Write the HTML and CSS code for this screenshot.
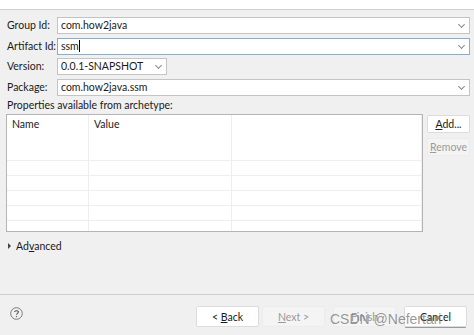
FILE: index.html
```html
<!DOCTYPE html>
<html lang="en">
<head>
  <meta charset="UTF-8">
  <meta name="viewport" content="width=device-width, initial-scale=1.0">
  <title>New Maven Project</title>
  <link rel="stylesheet" href="styles.css">
</head>
<body>
  <div class="topbar"></div>

  <div class="content">
    <div class="fields">
      <label>Group Id:</label>
      <div class="combo">com.how2java<span class="chev"></span></div>
      <label>Artifact Id:</label>
      <div class="combo focused">ssm<span class="caret"></span><span class="chev"></span></div>
      <label>Version:</label>
      <div class="combo short">0.0.1-SNAPSHOT<span class="chev"></span></div>
      <label>Package:</label>
      <div class="combo">com.how2java.ssm<span class="chev"></span></div>
    </div>

    <p class="caption">Properties available from archetype:</p>

    <div class="props">
      <div class="table">
        <div class="row head">
          <div class="cell c1">Name</div>
          <div class="cell c2">Value</div>
          <div class="cell c3"></div>
        </div>
        <div class="row"><div class="cell c1"></div><div class="cell c2"></div><div class="cell c3"></div></div>
        <div class="row"><div class="cell c1"></div><div class="cell c2"></div><div class="cell c3"></div></div>
        <div class="row"><div class="cell c1"></div><div class="cell c2"></div><div class="cell c3"></div></div>
        <div class="row"><div class="cell c1"></div><div class="cell c2"></div><div class="cell c3"></div></div>
        <div class="row"><div class="cell c1"></div><div class="cell c2"></div><div class="cell c3"></div></div>
        <div class="row last"><div class="cell c1"></div><div class="cell c2"></div><div class="cell c3"></div></div>
      </div>
      <div class="side">
        <button class="btn small"><u>A</u>dd...</button>
        <button class="btn small disabled"><u>R</u>emove</button>
      </div>
    </div>

    <div class="advanced"><span class="tri"></span>Ad<u>v</u>anced</div>
  </div>

  <div class="footer">
    <svg class="help" width="13" height="13" viewBox="0 0 13 13">
      <circle cx="6.5" cy="6.5" r="5.8" fill="none" stroke="#7a7a7a" stroke-width="1"/>
      <path d="M4.6 5.1 C4.6 3.2 8.4 3.2 8.4 5.1 C8.4 6.3 6.5 6.4 6.5 7.8" fill="none" stroke="#555" stroke-width="1.1"/>
      <circle cx="6.5" cy="9.6" r="0.7" fill="#555"/>
    </svg>
    <div class="buttons">
      <button class="btn">&lt; <u>B</u>ack</button>
      <button class="btn disabled"><u>N</u>ext &gt;</button>
      <button class="btn disabled finish"><u>F</u>inish</button>
      <button class="btn default">Cancel</button>
    </div>
    <div class="watermark">CSDN @Nefertari</div>
  </div>
</body>
</html>
```
FILE: styles.css
```css
body {
  margin: 0;
  width: 474px;
  height: 335px;
  background-color: #f0f0f0;
  font-family: 'Lato', sans-serif;
  font-size: 10.5px;
  color: #1a1a1a;
  overflow: hidden;
  position: relative;
}
.topbar {
  height: 9px;
  background-color: #ffffff;
  border-bottom: 1px solid #cfcfcf;
}
.content {
  padding: 7px 4px 0 7px;
}
.fields {
  display: grid;
  grid-template-columns: 50px 1fr;
  grid-auto-rows: 17px;
  row-gap: 3.5px;
  align-items: center;
}
.fields label {
  line-height: 17px;
  white-space: nowrap;
}
.combo {
  position: relative;
  height: 17px;
  box-sizing: border-box;
  background-color: #ffffff;
  border: 1px solid #c4c4c4;
  padding-left: 3px;
  line-height: 15px;
}
.combo.short {
  width: 110px;
}
.combo.focused {
  border-color: #86aece;
}
.chev {
  position: absolute;
  right: 5px;
  top: 4px;
  width: 4px;
  height: 4px;
  border-right: 1px solid #8a8a8a;
  border-bottom: 1px solid #8a8a8a;
  transform: rotate(45deg);
}
.caret {
  display: inline-block;
  width: 1px;
  height: 12px;
  background-color: #000;
  vertical-align: -2px;
}
.caption {
  margin: 2px 0 2px;
  line-height: 14px;
}
.props {
  display: flex;
  gap: 4px;
  margin-left: -1px;
}
.table {
  width: 417px;
  height: 118px;
  box-sizing: border-box;
  background-color: #ffffff;
  border: 1px solid #b4b4b4;
  overflow: hidden;
}
.row {
  display: flex;
  height: 15px;
  border-bottom: 1px solid #eeeeee;
  box-sizing: border-box;
}
.row.head {
  height: 31px;
  border-bottom: none;
}
.cell {
  border-right: 1px solid #eeeeee;
  padding: 1px 0 0 5px;
  line-height: 16px;
  box-sizing: border-box;
}
.c1 { width: 82px; }
.c2 { width: 143px; }
.c3 { flex: 1; }
.side {
  display: flex;
  flex-direction: column;
  gap: 5px;
  padding-top: 1px;
}
.btn {
  font-family: inherit;
  font-size: 10.5px;
  color: #1a1a1a;
  background-color: #ffffff;
  border: 1px solid #dcdcdc;
  border-radius: 2px;
  height: 21px;
  width: 63px;
  padding: 0;
}
.btn.small {
  width: 43px;
  height: 18px;
}
.btn.disabled {
  background-color: #f4f4f4;
  border-color: #ececec;
  color: #9a9a9a;
}
.advanced {
  margin-top: 7px;
  padding-left: 1px;
  line-height: 14px;
  display: flex;
  align-items: center;
}
.tri {
  width: 0;
  height: 0;
  border-top: 3px solid transparent;
  border-bottom: 3px solid transparent;
  border-left: 3px solid #444;
  margin-right: 5px;
}
.footer {
  position: absolute;
  left: 0;
  right: 0;
  top: 294px;
  bottom: 0;
  border-top: 1px solid #cfcfcf;
  display: flex;
  align-items: flex-start;
  justify-content: space-between;
  padding: 11px 7px 0 10px;
}
.help {
  margin-top: 1px;
}
.buttons {
  display: flex;
  gap: 3px;
}
.buttons .finish {
  margin-left: 5px;
  margin-right: 5px;
}
.btn.default {
  box-shadow: 0 2px 0 -1px #9a9a9a;
}
.watermark {
  position: absolute;
  left: 330px;
  top: 16px;
  font-family: 'Liberation Sans', sans-serif;
  font-size: 14px;
  color: rgba(120, 120, 120, 0.75);
}
```
